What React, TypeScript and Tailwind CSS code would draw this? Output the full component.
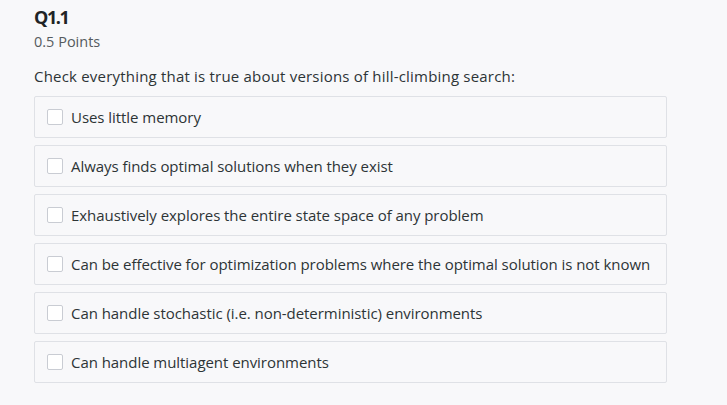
import { useState } from 'react';

const OPTIONS = [
  'Uses little memory',
  'Always finds optimal solutions when they exist',
  'Exhaustively explores the entire state space of any problem',
  'Can be effective for optimization problems where the optimal solution is not known',
  'Can handle stochastic (i.e. non-deterministic) environments',
  'Can handle multiagent environments',
];

export default function App() {
  const [checked, setChecked] = useState<boolean[]>(OPTIONS.map(() => false));

  return (
    <div className="min-h-[405px] w-full bg-[#f8f8fa] font-['Open_Sans',sans-serif] text-[#2d3436]">
      <div className="pl-[34px] pt-[6px] w-[667px]">
        <h3 className="text-[18px] font-bold leading-[22px] tracking-[-1.4px] text-[#1f2426]">Q1.1</h3>
        <p className="mt-[4px] text-[14.5px] leading-[20px] text-[#555b5e]">0.5 Points</p>
        <p className="mt-[14px] text-[15px] leading-[20px] tracking-[0.2px]">
          Check everything that is true about versions of hill-climbing search:
        </p>
        <div className="mt-[10px] flex flex-col gap-[7px]">
          {OPTIONS.map((opt, i) => (
            <label
              key={opt}
              className="flex h-[42px] items-center rounded-[2px] border border-[#dfe1e6] bg-[#f8f8fa] pl-[12px] cursor-pointer"
            >
              <input
                type="checkbox"
                className="sr-only"
                checked={checked[i]}
                onChange={() => setChecked((c) => c.map((v, j) => (j === i ? !v : v)))}
              />
              <span className="h-[16px] w-[16px] shrink-0 rounded-[2px] border border-[#c9ccd3] bg-white" />
              <span className="ml-[8px] -mt-px whitespace-nowrap text-[15px] leading-[20px] tracking-[-0.05px]">{opt}</span>
            </label>
          ))}
        </div>
      </div>
    </div>
  );
}
